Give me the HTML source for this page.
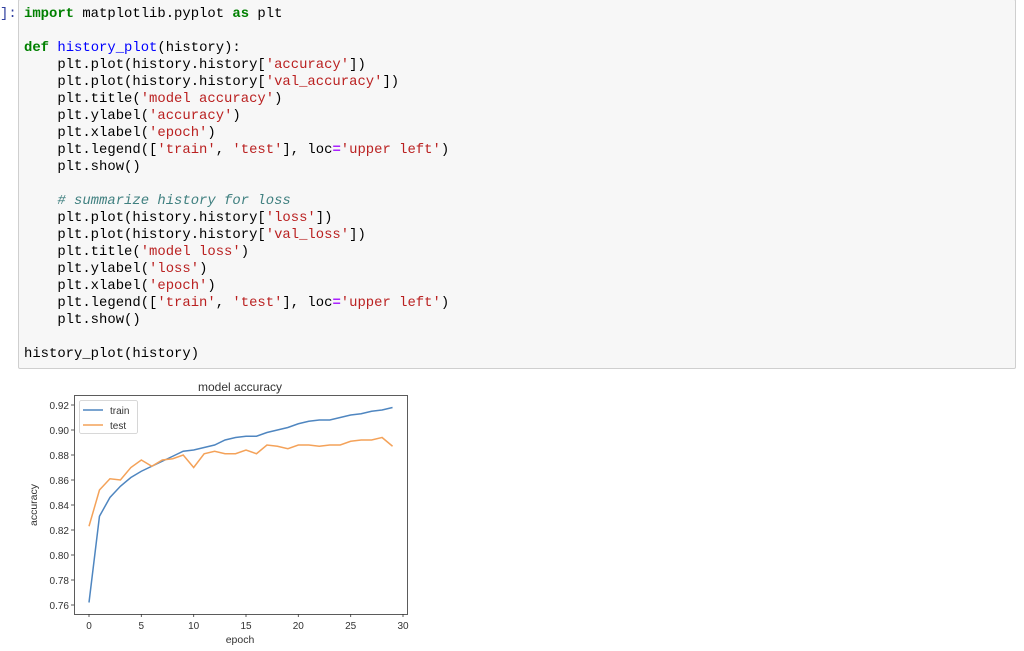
<!DOCTYPE html>
<html><head><meta charset="utf-8"><style>
body{margin:0;background:#fff;width:1024px;height:651px;overflow:hidden;position:relative;font-family:"Liberation Sans",sans-serif}
.prompt{position:absolute;left:0;top:6px;font:13.9px/17px "Liberation Mono",monospace;color:#303f9f}
.cell{position:absolute;left:18px;top:-1px;width:998px;height:370px;background:#f7f7f7;border:1px solid #cfcfcf;border-radius:2px;box-sizing:border-box}
pre{position:absolute;left:24px;top:6px;margin:0;font:13.9px/17px "Liberation Mono",monospace;color:#000}
.k{color:#008000;font-weight:bold}.f{color:#0000ff}.s{color:#ba2121}.c{color:#408080;font-style:italic}.o{color:#aa22ff;font-weight:bold}
</style></head><body>
<div class="prompt">]:</div>
<div class="cell"></div>
<pre><span class="k">import</span> matplotlib.pyplot <span class="k">as</span> plt

<span class="k">def</span> <span class="f">history_plot</span>(history):
    plt.plot(history.history[<span class="s">'accuracy'</span>])
    plt.plot(history.history[<span class="s">'val_accuracy'</span>])
    plt.title(<span class="s">'model accuracy'</span>)
    plt.ylabel(<span class="s">'accuracy'</span>)
    plt.xlabel(<span class="s">'epoch'</span>)
    plt.legend([<span class="s">'train'</span>, <span class="s">'test'</span>], loc<span class="o">=</span><span class="s">'upper left'</span>)
    plt.show()

    <span class="c"># summarize history for loss</span>
    plt.plot(history.history[<span class="s">'loss'</span>])
    plt.plot(history.history[<span class="s">'val_loss'</span>])
    plt.title(<span class="s">'model loss'</span>)
    plt.ylabel(<span class="s">'loss'</span>)
    plt.xlabel(<span class="s">'epoch'</span>)
    plt.legend([<span class="s">'train'</span>, <span class="s">'test'</span>], loc<span class="o">=</span><span class="s">'upper left'</span>)
    plt.show()

history_plot(history)</pre>
<svg style="position:absolute;left:0;top:0" width="1024" height="651" font-family="Liberation Sans, sans-serif" fill="#333">
<text x="240" y="391" font-size="12" text-anchor="middle">model accuracy</text>
<g transform="translate(89,405) scale(10.467,-1250) translate(0,-0.92)" fill="none" stroke-width="1.5">
<polyline vector-effect="non-scaling-stroke" stroke="#4f86c0" points="0,0.762 1,0.831 2,0.846 3,0.855 4,0.862 5,0.867 6,0.871 7,0.875 8,0.879 9,0.883 10,0.884 11,0.886 12,0.888 13,0.892 14,0.894 15,0.895 16,0.895 17,0.898 18,0.9 19,0.902 20,0.905 21,0.907 22,0.908 23,0.908 24,0.91 25,0.912 26,0.913 27,0.915 28,0.916 29,0.918"/>
<polyline vector-effect="non-scaling-stroke" stroke="#f4a259" points="0,0.823 1,0.852 2,0.861 3,0.86 4,0.87 5,0.876 6,0.871 7,0.876 8,0.877 9,0.88 10,0.87 11,0.881 12,0.883 13,0.881 14,0.881 15,0.884 16,0.881 17,0.888 18,0.887 19,0.885 20,0.888 21,0.888 22,0.887 23,0.888 24,0.888 25,0.891 26,0.892 27,0.892 28,0.894 29,0.887"/>
</g>
<rect x="74.5" y="395.5" width="333" height="219" fill="none" stroke="#333" stroke-width="0.8"/>
<rect x="79.5" y="400.5" width="58" height="33" fill="#fff" fill-opacity="0.8" stroke="#ccc" stroke-width="0.8" rx="2"/>
<line x1="83" y1="410" x2="103" y2="410" stroke="#4f86c0" stroke-width="1.5"/>
<line x1="83" y1="425" x2="103" y2="425" stroke="#f4a259" stroke-width="1.5"/>
<text x="110" y="414" font-size="10">train</text>
<text x="110" y="429" font-size="10">test</text>
<g stroke="#333" stroke-width="0.8">
<line x1="71" y1="405" x2="74" y2="405"/><line x1="71" y1="430" x2="74" y2="430"/><line x1="71" y1="455" x2="74" y2="455"/><line x1="71" y1="480" x2="74" y2="480"/><line x1="71" y1="505" x2="74" y2="505"/><line x1="71" y1="530" x2="74" y2="530"/><line x1="71" y1="555" x2="74" y2="555"/><line x1="71" y1="580" x2="74" y2="580"/><line x1="71" y1="605" x2="74" y2="605"/>
</g>
<g font-size="10" text-anchor="end">
<text x="69" y="409">0.92</text><text x="69" y="434">0.90</text><text x="69" y="459">0.88</text><text x="69" y="484">0.86</text><text x="69" y="509">0.84</text><text x="69" y="534">0.82</text><text x="69" y="559">0.80</text><text x="69" y="584">0.78</text><text x="69" y="609">0.76</text>
</g>
<g stroke="#333" stroke-width="0.8">
<line x1="89" y1="614" x2="89" y2="617"/><line x1="141.3" y1="614" x2="141.3" y2="617"/><line x1="193.7" y1="614" x2="193.7" y2="617"/><line x1="246" y1="614" x2="246" y2="617"/><line x1="298.3" y1="614" x2="298.3" y2="617"/><line x1="350.7" y1="614" x2="350.7" y2="617"/><line x1="403" y1="614" x2="403" y2="617"/>
</g>
<g font-size="10" text-anchor="middle">
<text x="89" y="629">0</text><text x="141.3" y="629">5</text><text x="193.7" y="629">10</text><text x="246" y="629">15</text><text x="298.3" y="629">20</text><text x="350.7" y="629">25</text><text x="403" y="629">30</text>
</g>
<text x="240" y="643" font-size="10.5" text-anchor="middle">epoch</text>
<text transform="translate(37,505) rotate(-90)" font-size="10.5" text-anchor="middle">accuracy</text>
</svg>
</body></html>
